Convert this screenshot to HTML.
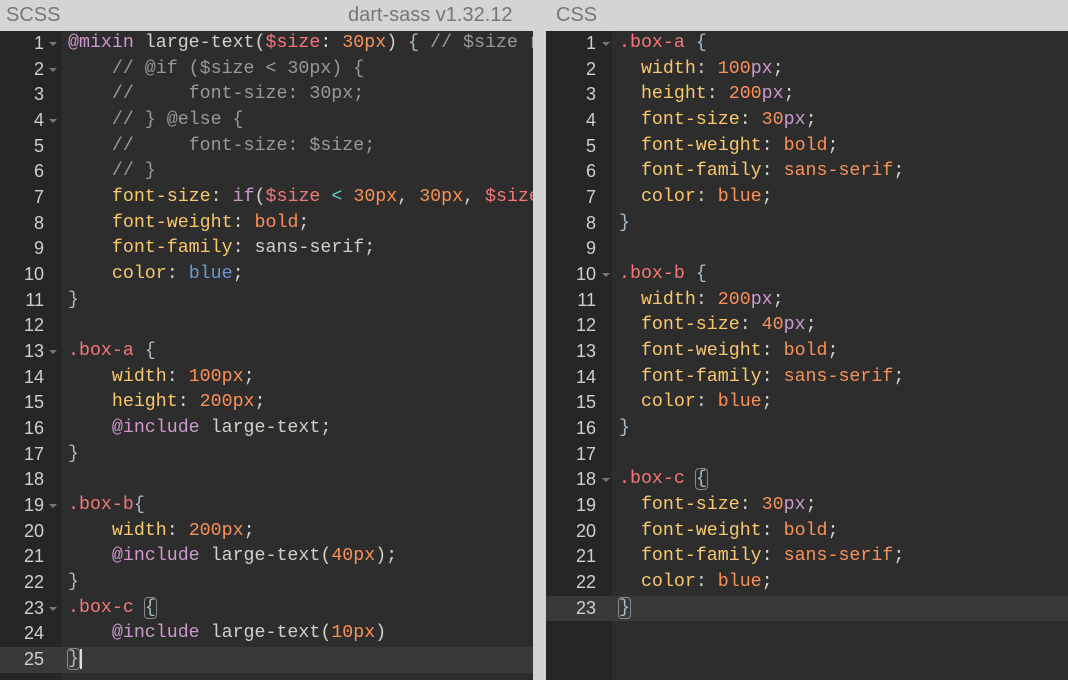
<!DOCTYPE html>
<html><head><meta charset="utf-8">
<style>
*{margin:0;padding:0;box-sizing:border-box}
body{width:1068px;height:680px;background:#d4d4d4;position:relative;overflow:hidden;font-family:"Liberation Mono",monospace}
.hdr{position:absolute;top:0;height:31px;font-family:"Liberation Sans",sans-serif;font-size:20px;color:#777;line-height:30px}
.pane{position:absolute;top:31px;height:649px;background:#2d2d2d;overflow:hidden}
.gut{position:absolute;left:0;top:0;bottom:0;background:#262626}
.ln{position:absolute;left:0;height:25.67px;line-height:25.67px;font-size:18.3px;white-space:pre;color:#d3d0c8}
.num{position:absolute;height:25.67px;line-height:25.67px;font-size:18px;color:#cfcfcf;text-align:right;font-family:"Liberation Sans",sans-serif}
.ar{position:absolute;width:0;height:0;border-left:4px solid transparent;border-right:4px solid transparent;border-top:4px solid #777}
.act{position:absolute;left:0;right:0;height:25.67px;background:#393939}
.k{color:#cc99cc}.v{color:#f2777a}.n{color:#f99157}.c{color:#999}.p{color:#f9c86b}.s{color:#f2777a}.b{color:#6699cc}.o{color:#66cccc}.u{color:#cc99cc}.br{color:#a9bcc9}
.mb{outline:1px solid #888;border-radius:3px}
</style></head><body>
<div class="hdr" style="left:6px">SCSS</div>
<div class="hdr" style="left:348px">dart-sass v1.32.12</div>
<div class="hdr" style="left:556px">CSS</div>
<div class="pane" id="L" style="left:0;width:533px"><div class="gut" style="width:62px"></div></div>
<div class="pane" id="R" style="left:546px;width:522px"><div class="gut" style="width:66px"></div></div>
<script>
var L=[
'<span class="k">@mixin</span> large-text(<span class="v">$size</span>: <span class="n">30px</span>) <span class="br">{</span> <span class="c">// $size \u25af</span>',
'<span class="c">    // @if ($size &lt; 30px) {</span>',
'<span class="c">    //     font-size: 30px;</span>',
'<span class="c">    // } @else {</span>',
'<span class="c">    //     font-size: $size;</span>',
'<span class="c">    // }</span>',
'    <span class="p">font-size</span>: <span class="k">if</span>(<span class="v">$size</span> <span class="o">&lt;</span> <span class="n">30px</span>, <span class="n">30px</span>, <span class="v">$size</span>',
'    <span class="p">font-weight</span>: <span class="n">bold</span>;',
'    <span class="p">font-family</span>: sans-serif;',
'    <span class="p">color</span>: <span class="b">blue</span>;',
'<span class="br">}</span>','',
'<span class="s">.box-a</span> <span class="br">{</span>',
'    <span class="p">width</span>: <span class="n">100px</span>;',
'    <span class="p">height</span>: <span class="n">200px</span>;',
'    <span class="k">@include</span> large-text;',
'<span class="br">}</span>','',
'<span class="s">.box-b</span><span class="br">{</span>',
'    <span class="p">width</span>: <span class="n">200px</span>;',
'    <span class="k">@include</span> large-text(<span class="n">40px</span>);',
'<span class="br">}</span>',
'<span class="s">.box-c</span> <span class="br mb">{</span>',
'    <span class="k">@include</span> large-text(<span class="n">10px</span>)',
'<span class="br mb">}</span><span style="border-left:2px solid #ddd;margin-left:1px"></span>'];
var LF=[1,2,4,13,19,23];
var R=[
'<span class="s">.box-a</span> <span class="br">{</span>',
'  <span class="p">width</span>: <span class="n">100</span><span class="u">px</span>;',
'  <span class="p">height</span>: <span class="n">200</span><span class="u">px</span>;',
'  <span class="p">font-size</span>: <span class="n">30</span><span class="u">px</span>;',
'  <span class="p">font-weight</span>: <span class="n">bold</span>;',
'  <span class="p">font-family</span>: <span class="n">sans-serif</span>;',
'  <span class="p">color</span>: <span class="n">blue</span>;',
'<span class="br">}</span>','',
'<span class="s">.box-b</span> <span class="br">{</span>',
'  <span class="p">width</span>: <span class="n">200</span><span class="u">px</span>;',
'  <span class="p">font-size</span>: <span class="n">40</span><span class="u">px</span>;',
'  <span class="p">font-weight</span>: <span class="n">bold</span>;',
'  <span class="p">font-family</span>: <span class="n">sans-serif</span>;',
'  <span class="p">color</span>: <span class="n">blue</span>;',
'<span class="br">}</span>','',
'<span class="s">.box-c</span> <span class="br mb">{</span>',
'  <span class="p">font-size</span>: <span class="n">30</span><span class="u">px</span>;',
'  <span class="p">font-weight</span>: <span class="n">bold</span>;',
'  <span class="p">font-family</span>: <span class="n">sans-serif</span>;',
'  <span class="p">color</span>: <span class="n">blue</span>;',
'<span class="br mb">}</span>'];
var RF=[1,10,18];
function build(id,lines,folds,numR,arX,codeX){
 var p=document.getElementById(id),h='';
 var n=lines.length,lh=25.67;
 h+='<div class="act" style="top:'+((n-1)*lh)+'px"></div>';
 for(var i=0;i<n;i++){
  var t=i*lh;
  h+='<div class="num" style="top:'+t+'px;left:0;width:'+numR+'px">'+(i+1)+'</div>';
  if(folds.indexOf(i+1)>=0)h+='<div class="ar" style="top:'+(t+11)+'px;left:'+arX+'px"></div>';
  h+='<div class="ln" style="top:'+t+'px;left:'+codeX+'px">'+lines[i]+'</div>';
 }
 p.insertAdjacentHTML('beforeend',h);
}
build('L',L,LF,44,49,68);
build('R',R,RF,50,56,73);
</script>
</body></html>
